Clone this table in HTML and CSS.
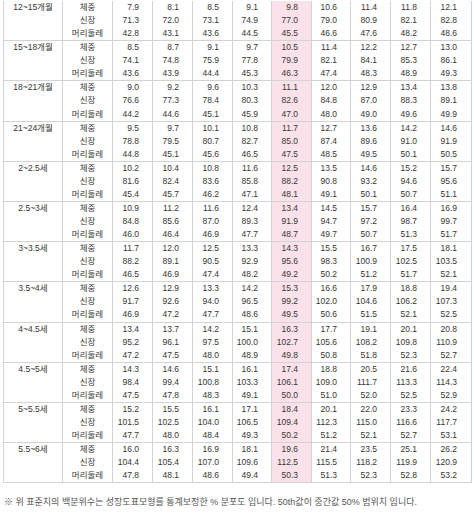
FILE: index.html
```html
<!DOCTYPE html>
<html lang="ko">
<head>
<meta charset="utf-8">
<link rel="stylesheet" href="styles.css">
</head>
<body>
<div class="wrap">
<table class="grid">
<colgroup>
<col class="c-age"><col class="c-lbl"><col class="c40"><col class="c40"><col class="c40"><col class="c39"><col class="c40"><col class="c39"><col class="c40"><col class="c40"><col class="c41">
</colgroup>
<tbody>
<tr><td class="age" rowspan="3">12~15개월</td><td class="lbl">체중</td><td class="n">7.9</td><td class="n">8.1</td><td class="n">8.5</td><td class="n">9.1</td><td class="n p">9.8</td><td class="n">10.6</td><td class="n">11.4</td><td class="n">11.8</td><td class="n r">12.1</td></tr>
<tr><td class="lbl">신장</td><td class="n">71.3</td><td class="n">72.0</td><td class="n">73.1</td><td class="n">74.9</td><td class="n p">77.0</td><td class="n">79.0</td><td class="n">80.9</td><td class="n">82.1</td><td class="n r">82.8</td></tr>
<tr class="end"><td class="lbl">머리둘레</td><td class="n">42.8</td><td class="n">43.1</td><td class="n">43.6</td><td class="n">44.5</td><td class="n p">45.5</td><td class="n">46.6</td><td class="n">47.6</td><td class="n">48.2</td><td class="n r">48.6</td></tr>

<tr><td class="age" rowspan="3">15~18개월</td><td class="lbl">체중</td><td class="n">8.5</td><td class="n">8.7</td><td class="n">9.1</td><td class="n">9.7</td><td class="n p">10.5</td><td class="n">11.4</td><td class="n">12.2</td><td class="n">12.7</td><td class="n r">13.0</td></tr>
<tr><td class="lbl">신장</td><td class="n">74.1</td><td class="n">74.8</td><td class="n">75.9</td><td class="n">77.8</td><td class="n p">79.9</td><td class="n">82.1</td><td class="n">84.1</td><td class="n">85.3</td><td class="n r">86.1</td></tr>
<tr class="end"><td class="lbl">머리둘레</td><td class="n">43.6</td><td class="n">43.9</td><td class="n">44.4</td><td class="n">45.3</td><td class="n p">46.3</td><td class="n">47.4</td><td class="n">48.3</td><td class="n">48.9</td><td class="n r">49.3</td></tr>

<tr><td class="age" rowspan="3">18~21개월</td><td class="lbl">체중</td><td class="n">9.0</td><td class="n">9.2</td><td class="n">9.6</td><td class="n">10.3</td><td class="n p">11.1</td><td class="n">12.0</td><td class="n">12.9</td><td class="n">13.4</td><td class="n r">13.8</td></tr>
<tr><td class="lbl">신장</td><td class="n">76.6</td><td class="n">77.3</td><td class="n">78.4</td><td class="n">80.3</td><td class="n p">82.6</td><td class="n">84.8</td><td class="n">87.0</td><td class="n">88.3</td><td class="n r">89.1</td></tr>
<tr class="end"><td class="lbl">머리둘레</td><td class="n">44.2</td><td class="n">44.6</td><td class="n">45.1</td><td class="n">45.9</td><td class="n p">47.0</td><td class="n">48.0</td><td class="n">49.0</td><td class="n">49.6</td><td class="n r">49.9</td></tr>

<tr><td class="age" rowspan="3">21~24개월</td><td class="lbl">체중</td><td class="n">9.5</td><td class="n">9.7</td><td class="n">10.1</td><td class="n">10.8</td><td class="n p">11.7</td><td class="n">12.7</td><td class="n">13.6</td><td class="n">14.2</td><td class="n r">14.6</td></tr>
<tr><td class="lbl">신장</td><td class="n">78.8</td><td class="n">79.5</td><td class="n">80.7</td><td class="n">82.7</td><td class="n p">85.0</td><td class="n">87.4</td><td class="n">89.6</td><td class="n">91.0</td><td class="n r">91.9</td></tr>
<tr class="end"><td class="lbl">머리둘레</td><td class="n">44.8</td><td class="n">45.1</td><td class="n">45.6</td><td class="n">46.5</td><td class="n p">47.5</td><td class="n">48.5</td><td class="n">49.5</td><td class="n">50.1</td><td class="n r">50.5</td></tr>

<tr><td class="age" rowspan="3">2~2.5세</td><td class="lbl">체중</td><td class="n">10.2</td><td class="n">10.4</td><td class="n">10.8</td><td class="n">11.6</td><td class="n p">12.5</td><td class="n">13.5</td><td class="n">14.6</td><td class="n">15.2</td><td class="n r">15.7</td></tr>
<tr><td class="lbl">신장</td><td class="n">81.6</td><td class="n">82.4</td><td class="n">83.6</td><td class="n">85.8</td><td class="n p">88.2</td><td class="n">90.8</td><td class="n">93.2</td><td class="n">94.6</td><td class="n r">95.6</td></tr>
<tr class="end"><td class="lbl">머리둘레</td><td class="n">45.4</td><td class="n">45.7</td><td class="n">46.2</td><td class="n">47.1</td><td class="n p">48.1</td><td class="n">49.1</td><td class="n">50.1</td><td class="n">50.7</td><td class="n r">51.1</td></tr>

<tr><td class="age" rowspan="3">2.5~3세</td><td class="lbl">체중</td><td class="n">10.9</td><td class="n">11.2</td><td class="n">11.6</td><td class="n">12.4</td><td class="n p">13.4</td><td class="n">14.5</td><td class="n">15.7</td><td class="n">16.4</td><td class="n r">16.9</td></tr>
<tr><td class="lbl">신장</td><td class="n">84.8</td><td class="n">85.6</td><td class="n">87.0</td><td class="n">89.3</td><td class="n p">91.9</td><td class="n">94.7</td><td class="n">97.2</td><td class="n">98.7</td><td class="n r">99.7</td></tr>
<tr class="end"><td class="lbl">머리둘레</td><td class="n">46.0</td><td class="n">46.4</td><td class="n">46.9</td><td class="n">47.7</td><td class="n p">48.7</td><td class="n">49.7</td><td class="n">50.7</td><td class="n">51.3</td><td class="n r">51.7</td></tr>

<tr><td class="age" rowspan="3">3~3.5세</td><td class="lbl">체중</td><td class="n">11.7</td><td class="n">12.0</td><td class="n">12.5</td><td class="n">13.3</td><td class="n p">14.3</td><td class="n">15.5</td><td class="n">16.7</td><td class="n">17.5</td><td class="n r">18.1</td></tr>
<tr><td class="lbl">신장</td><td class="n">88.2</td><td class="n">89.1</td><td class="n">90.5</td><td class="n">92.9</td><td class="n p">95.6</td><td class="n">98.3</td><td class="n">100.9</td><td class="n">102.5</td><td class="n r">103.5</td></tr>
<tr class="end"><td class="lbl">머리둘레</td><td class="n">46.5</td><td class="n">46.9</td><td class="n">47.4</td><td class="n">48.2</td><td class="n p">49.2</td><td class="n">50.2</td><td class="n">51.2</td><td class="n">51.7</td><td class="n r">52.1</td></tr>

<tr><td class="age" rowspan="3">3.5~4세</td><td class="lbl">체중</td><td class="n">12.6</td><td class="n">12.9</td><td class="n">13.3</td><td class="n">14.2</td><td class="n p">15.3</td><td class="n">16.6</td><td class="n">17.9</td><td class="n">18.8</td><td class="n r">19.4</td></tr>
<tr><td class="lbl">신장</td><td class="n">91.7</td><td class="n">92.6</td><td class="n">94.0</td><td class="n">96.5</td><td class="n p">99.2</td><td class="n">102.0</td><td class="n">104.6</td><td class="n">106.2</td><td class="n r">107.3</td></tr>
<tr class="end"><td class="lbl">머리둘레</td><td class="n">46.9</td><td class="n">47.2</td><td class="n">47.7</td><td class="n">48.6</td><td class="n p">49.5</td><td class="n">50.6</td><td class="n">51.5</td><td class="n">52.1</td><td class="n r">52.5</td></tr>

<tr><td class="age" rowspan="3">4~4.5세</td><td class="lbl">체중</td><td class="n">13.4</td><td class="n">13.7</td><td class="n">14.2</td><td class="n">15.1</td><td class="n p">16.3</td><td class="n">17.7</td><td class="n">19.1</td><td class="n">20.1</td><td class="n r">20.8</td></tr>
<tr><td class="lbl">신장</td><td class="n">95.2</td><td class="n">96.1</td><td class="n">97.5</td><td class="n">100.0</td><td class="n p">102.7</td><td class="n">105.6</td><td class="n">108.2</td><td class="n">109.8</td><td class="n r">110.9</td></tr>
<tr class="end"><td class="lbl">머리둘레</td><td class="n">47.2</td><td class="n">47.5</td><td class="n">48.0</td><td class="n">48.9</td><td class="n p">49.8</td><td class="n">50.8</td><td class="n">51.8</td><td class="n">52.3</td><td class="n r">52.7</td></tr>

<tr><td class="age" rowspan="3">4.5~5세</td><td class="lbl">체중</td><td class="n">14.3</td><td class="n">14.6</td><td class="n">15.1</td><td class="n">16.1</td><td class="n p">17.4</td><td class="n">18.8</td><td class="n">20.5</td><td class="n">21.6</td><td class="n r">22.4</td></tr>
<tr><td class="lbl">신장</td><td class="n">98.4</td><td class="n">99.4</td><td class="n">100.8</td><td class="n">103.3</td><td class="n p">106.1</td><td class="n">109.0</td><td class="n">111.7</td><td class="n">113.3</td><td class="n r">114.3</td></tr>
<tr class="end"><td class="lbl">머리둘레</td><td class="n">47.5</td><td class="n">47.8</td><td class="n">48.3</td><td class="n">49.1</td><td class="n p">50.0</td><td class="n">51.0</td><td class="n">52.0</td><td class="n">52.5</td><td class="n r">52.9</td></tr>

<tr><td class="age" rowspan="3">5~5.5세</td><td class="lbl">체중</td><td class="n">15.2</td><td class="n">15.5</td><td class="n">16.1</td><td class="n">17.1</td><td class="n p">18.4</td><td class="n">20.1</td><td class="n">22.0</td><td class="n">23.3</td><td class="n r">24.2</td></tr>
<tr><td class="lbl">신장</td><td class="n">101.5</td><td class="n">102.5</td><td class="n">104.0</td><td class="n">106.5</td><td class="n p">109.4</td><td class="n">112.3</td><td class="n">115.0</td><td class="n">116.6</td><td class="n r">117.7</td></tr>
<tr class="end"><td class="lbl">머리둘레</td><td class="n">47.7</td><td class="n">48.0</td><td class="n">48.4</td><td class="n">49.3</td><td class="n p">50.2</td><td class="n">51.2</td><td class="n">52.1</td><td class="n">52.7</td><td class="n r">53.1</td></tr>

<tr><td class="age" rowspan="3">5.5~6세</td><td class="lbl">체중</td><td class="n">16.0</td><td class="n">16.3</td><td class="n">16.9</td><td class="n">18.1</td><td class="n p">19.6</td><td class="n">21.4</td><td class="n">23.5</td><td class="n">25.1</td><td class="n r">26.2</td></tr>
<tr><td class="lbl">신장</td><td class="n">104.4</td><td class="n">105.4</td><td class="n">107.0</td><td class="n">109.6</td><td class="n p">112.5</td><td class="n">115.5</td><td class="n">118.2</td><td class="n">119.9</td><td class="n r">120.9</td></tr>
<tr class="end"><td class="lbl">머리둘레</td><td class="n">47.8</td><td class="n">48.1</td><td class="n">48.6</td><td class="n">49.4</td><td class="n p">50.3</td><td class="n">51.3</td><td class="n">52.3</td><td class="n">52.8</td><td class="n r">53.2</td></tr>
</tbody>
</table>
<p class="note">※ 위 표준치의 백분위수는 성장도표모형를 통계보정한 % 분포도 입니다. 50th값이 중간값 50% 범위치 입니다.</p>
</div>
</body>
</html>
```
FILE: styles.css
```css
html, body {
  margin: 0;
  padding: 0;
  background: #ffffff;
}
body {
  font-family: "Liberation Sans", "Noto Sans CJK KR", sans-serif;
  color: #363636;
}
.wrap {
  padding: 1px 0 0 3px;
}
.grid {
  border-collapse: collapse;
  table-layout: fixed;
  width: 468px;
  font-size: 8.5px;
}
.c-age { width: 59px; }
.c-lbl { width: 50px; }
.c39 { width: 39px; }
.c40 { width: 40px; }
.c41 { width: 41px; }
.grid td {
  height: 13.07px;
  line-height: 13.07px;
  padding: 0;
  border-left: 1px solid #d3d3d3;
  border-right: 1px solid #d3d3d3;
  white-space: nowrap;
  overflow: hidden;
}
.grid td.age {
  text-align: center;
  vertical-align: top;
  border-bottom: 1px solid #d3d3d3;
}
.grid td.lbl {
  text-align: center;
}
.grid td.n {
  text-align: right;
  padding-right: 13px;
}
.grid td.p {
  background: #fbe2ea;
}
.grid td.r {
  border-right: 1px solid #bdd8d6;
  padding-right: 14px;
}
.grid tr.end td {
  border-bottom: 1px solid #d3d3d3;
}
.note {
  margin: 13px 0 0 1px;
  font-size: 9px;
  line-height: 12px;
  color: #555555;
  white-space: nowrap;
}
```
